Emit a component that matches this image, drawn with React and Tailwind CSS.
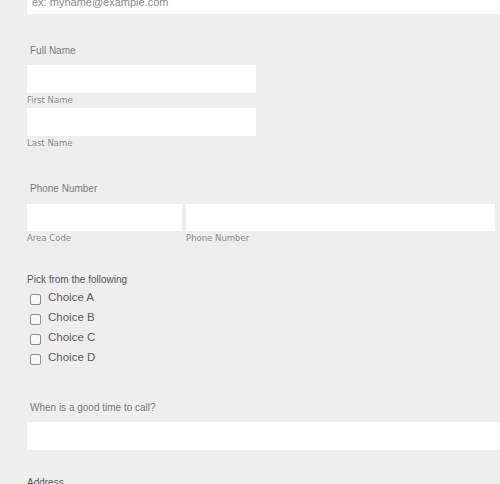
import React from "react";

function SubLabel({ children }) {
  return (
    <div className="text-[8.5px] leading-[14px] text-[#8a8a8a] font-['DejaVu_Sans',sans-serif]">
      {children}
    </div>
  );
}

function Field({ className }) {
  return <div className={"bg-white " + className}></div>;
}

function Choice({ label }) {
  return (
    <div className="flex items-center h-5 pl-[3px]">
      <span className="w-[11px] h-[11px] mt-[2px] border border-[#8c8c8c] rounded-[2px] bg-[#f7f7f7]"></span>
      <span className="ml-[7px] text-[11.5px] text-[#5a5a5a]">{label}</span>
    </div>
  );
}

export default function App() {
  return (
    <div className="bg-[#eeeeee] min-h-[484px] h-[484px] w-full overflow-hidden pl-[27px] font-['Liberation_Sans',Arial,sans-serif]">

      {/* email field, scrolled half out of view */}
      <div className="-mt-[14px] h-[28px] w-[490px] bg-white flex items-center pt-[5px] pl-[5px] text-[11px] text-[#8a8a8a]">
        ex: myname@example.com
      </div>

      {/* full name */}
      <div className="mt-[31px] pl-[3px] text-[10px] leading-[12px] text-[#7a7a7a]">Full Name</div>
      <Field className="mt-[8px] h-[28px] w-[229px]" />
      <SubLabel>First Name</SubLabel>
      <Field className="mt-px h-[28px] w-[229px]" />
      <SubLabel>Last Name</SubLabel>

      {/* phone */}
      <div className="mt-[33px] pl-[3px] text-[10px] leading-[12px] text-[#7a7a7a]">Phone Number</div>
      <div className="mt-[9px] flex gap-[4px]">
        <div>
          <Field className="h-[27px] w-[155px]" />
          <SubLabel>Area Code</SubLabel>
        </div>
        <div>
          <Field className="h-[27px] w-[309px]" />
          <SubLabel>Phone Number</SubLabel>
        </div>
      </div>

      {/* choices */}
      <div className="mt-[29px] text-[10px] leading-[12px] text-[#555]">Pick from the following</div>
      <div className="mt-[2px] flex flex-col">
        <Choice label="Choice A" />
        <Choice label="Choice B" />
        <Choice label="Choice C" />
        <Choice label="Choice D" />
      </div>

      {/* call time */}
      <div className="mt-[34px] pl-[3px] text-[10px] leading-[12px] text-[#7a7a7a]">When is a good time to call?</div>
      <Field className="mt-[8px] h-[28px] w-[490px]" />

      <div className="mt-[27px] text-[10px] leading-[12px] text-[#555]">Address</div>
    </div>
  );
}
